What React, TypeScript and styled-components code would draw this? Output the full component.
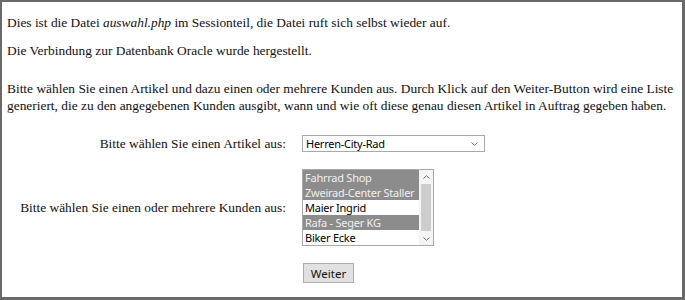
import React from "react";
import styled, { createGlobalStyle } from "styled-components";

const Global = createGlobalStyle`
  html, body { margin: 0; padding: 0; background: #ffffff; }
  * { box-sizing: border-box; }
`;

const Frame = styled.div`
  width: 685px;
  height: 300px;
  border-style: solid;
  border-color: #6a6a6a;
  border-width: 2px 3px 3px 2px;
  background: #fff;
  padding: 0 2px 0 5px;
  font-family: "Liberation Serif", "Times New Roman", serif;
  font-size: 13.4px;
  color: #111;
  overflow: hidden;
`;

const P = styled.p<{ $top: number }>`
  margin: ${(p) => p.$top}px 0 0 0;
  line-height: 17px;
`;

const Form = styled.div`
  display: grid;
  grid-template-columns: 279px auto;
  column-gap: 16px;
  row-gap: 17px;
  margin-top: 21px;
  align-items: center;
`;

const Label = styled.div`
  text-align: right;
  line-height: 15px;
`;

const Cell = styled.div`
  display: flex;
`;

const CtlFont = `
  font-family: "Noto Sans", "Open Sans", "DejaVu Sans", sans-serif;
  font-size: 11px;
  letter-spacing: -0.25px;
  color: #000;
`;

const Select = styled.div`
  ${CtlFont}
  width: 183px;
  height: 17px;
  border: 1px solid #a9a9a9;
  display: flex;
  align-items: center;
  justify-content: space-between;
  padding: 0 6px 0 3px;
  line-height: 15px;
`;

const ListBox = styled.div`
  ${CtlFont}
  width: 132px;
  border: 1px solid #a9a9a9;
  display: flex;
`;

const Options = styled.div`
  flex: 1;
  display: flex;
  flex-direction: column;
`;

const Option = styled.div<{ $sel?: boolean }>`
  height: 15px;
  line-height: 15px;
  padding-left: 2px;
  white-space: nowrap;
  overflow: hidden;
  background: ${(p) => (p.$sel ? "#8c8c8c" : "#fff")};
  color: ${(p) => (p.$sel ? "#f0f0f0" : "#000")};
`;

const Scrollbar = styled.div`
  width: 14px;
  display: flex;
  flex-direction: column;
  background: #f4f4f4;
`;

const Arrow = styled.div`
  height: 13px;
  display: flex;
  align-items: center;
  justify-content: center;
`;

const Thumb = styled.div`
  flex: 1;
  margin: 1px 2px;
  background: #cdcdcd;
`;

const Button = styled.div`
  font-family: "Noto Sans", "Open Sans", "DejaVu Sans", sans-serif;
  font-size: 11.5px;
  width: 51px;
  height: 20px;
  border: 1px solid #adadad;
  background: #e1e1e1;
  display: flex;
  align-items: center;
  justify-content: center;
  color: #111;
  margin-left: 1px;
`;

const Chevron = ({ up }: { up?: boolean }) => (
  <svg width="7" height="4" viewBox="0 0 7 4">
    <path
      d={up ? "M0.5 3.5 L3.5 0.7 L6.5 3.5" : "M0.5 0.5 L3.5 3.3 L6.5 0.5"}
      fill="none"
      stroke="#6a6a6a"
      strokeWidth="1"
    />
  </svg>
);

const kunden = [
  { name: "Fahrrad Shop", sel: true },
  { name: "Zweirad-Center Staller", sel: true },
  { name: "Maier Ingrid", sel: false },
  { name: "Rafa - Seger KG", sel: true },
  { name: "Biker Ecke", sel: false },
];

export default function App() {
  return (
    <>
      <Global />
      <Frame>
        <P $top={12}>
          Dies ist die Datei <i>auswahl.php</i> im Sessionteil, die Datei ruft sich selbst wieder auf.
        </P>
        <P $top={11}>Die Verbindung zur Datenbank Oracle wurde hergestellt.</P>
        <P $top={21}>
          Bitte wählen Sie einen Artikel und dazu einen oder mehrere Kunden aus. Durch Klick auf den
          Weiter-Button wird eine Liste generiert, die zu den angegebenen Kunden ausgibt, wann und wie
          oft diese genau diesen Artikel in Auftrag gegeben haben.
        </P>
        <Form>
          <Label>Bitte wählen Sie einen Artikel aus:</Label>
          <Cell>
            <Select>
              <span>Herren-City-Rad</span>
              <Chevron />
            </Select>
          </Cell>
          <Label>Bitte wählen Sie einen oder mehrere Kunden aus:</Label>
          <Cell>
            <ListBox>
              <Options>
                {kunden.map((k) => (
                  <Option key={k.name} $sel={k.sel}>
                    {k.name}
                  </Option>
                ))}
              </Options>
              <Scrollbar>
                <Arrow>
                  <Chevron up />
                </Arrow>
                <Thumb />
                <Arrow>
                  <Chevron />
                </Arrow>
              </Scrollbar>
            </ListBox>
          </Cell>
          <div />
          <Cell>
            <Button>Weiter</Button>
          </Cell>
        </Form>
      </Frame>
    </>
  );
}
